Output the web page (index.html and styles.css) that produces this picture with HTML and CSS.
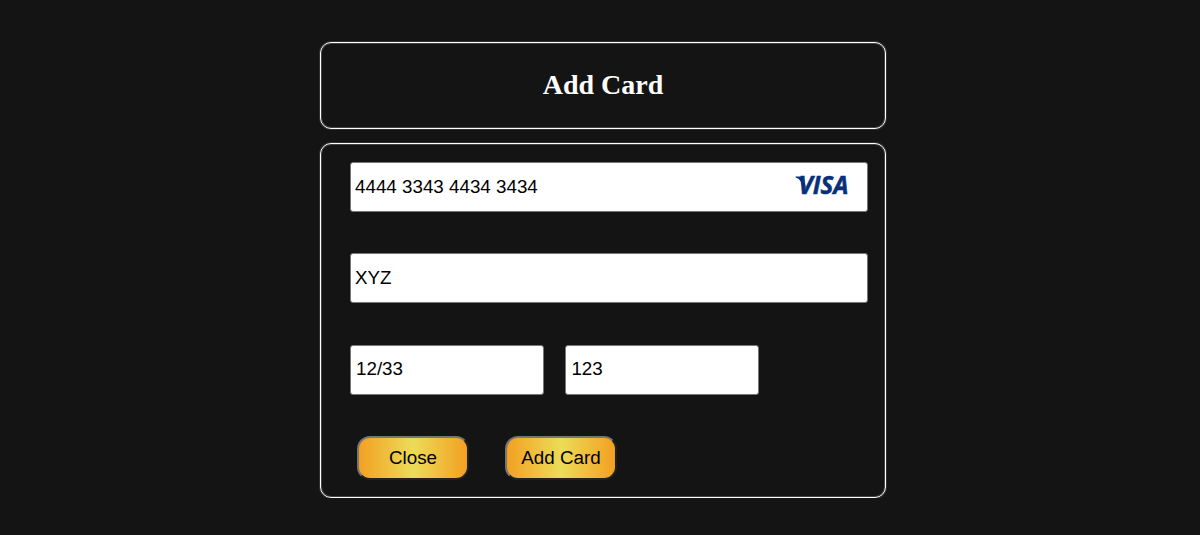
FILE: index.html
```
<!DOCTYPE html>
<html lang="en">
<head>
    <meta charset="UTF-8">
    <meta name="viewport" content="width=device-width, initial-scale=1.0">
    <title>Add Card</title>
    <link rel="stylesheet" href="styles.css">
</head>
<body>
    <div class="card-container">
        <div class="card-header">
            <h2>Add Card</h2>
        </div>

        <form class="card-form">
            <!-- Card Number -->
            <div class="input-group">
                <input type="text" name="card_number" value="4444 3343 4434 3434">
                <svg class="card-logo" width="58" height="36" viewBox="0 0 58 36">
                    <path d="M0.6 8.6 H6.4 Q8.4 8.7 8.9 10.7 L10.8 19 L8 22 L5.6 13.2 Q3.8 10.2 0.6 9.4 Z"/>
                    <text x="3.4" y="26.3" textLength="50" lengthAdjust="spacingAndGlyphs">VISA</text>
                </svg>
            </div>

            <!-- Name -->
            <div class="input-group">
                <input type="text" name="card_name" value="XYZ">
            </div>

            <!-- Expiry and CVV -->
            <div class="input-row">
                <input type="text" name="expiry" value="12/33">
                <input type="text" name="cvv" value="123">
            </div>

            <div class="buttons">
                <button type="button">Close</button>
                <button type="button">Add Card</button>
            </div>
        </form>
    </div>
</body>
</html>
```

FILE: styles.css
```
/* General Styles */
body {
    font-family: "Liberation Serif", "Times New Roman", serif;
    background-color: #141414;
    margin: 0;
}

.card-container {
    width: 566px;
    margin-left: 320px;
    padding-top: 42px;
}

.card-header,
.card-form {
    box-sizing: border-box;
    border: 1px solid #fff;
    border-radius: 11px;
    box-shadow: 0 0 0 1px rgba(255, 255, 255, 0.12), inset 0 0 0 1px rgba(255, 255, 255, 0.2);
}

.card-header {
    height: 87px;
    display: flex;
    align-items: center;
    justify-content: center;
    margin-bottom: 14px;
}

h2 {
    margin: 0;
    padding-bottom: 2px;
    color: #fff;
    font-size: 28px;
}

.card-form {
    height: 355px;
    padding: 18px 17px 0 29px;
}

.input-group {
    position: relative;
    height: 50px;
    margin-bottom: 41.4px;
}

input {
    display: block;
    box-sizing: border-box;
    width: 100%;
    height: 50px;
    padding: 0 4px 1px;
    border: 1px solid #767676;
    border-radius: 3px;
    background-color: #fff;
    color: #000;
    font-family: "Liberation Sans", Arial, sans-serif;
    font-size: 18.8px;
}

/* Card brand, shown over the right end of the input */
.card-logo {
    position: absolute;
    top: 6px;
    right: 15px;
    fill: #07307c;
}

.card-logo text {
    font-family: "Open Sans", sans-serif;
    font-size: 24.5px;
    font-weight: 700;
    font-style: italic;
    stroke: #07307c;
    stroke-width: 0.5px;
}

.input-row {
    display: flex;
    gap: 21.4px;
    margin-bottom: 41px;
}

.input-row input {
    width: 194px;
    padding-left: 5px;
}

.buttons {
    display: flex;
    gap: 36px;
    padding-left: 7px;
}

button {
    width: 112px;
    height: 44px;
    padding: 1px 0 0;
    border: 2px solid;
    border-color: #767676 #212121 #212121 #767676;
    border-radius: 13px;
    background: linear-gradient(to right, #f3a022, #ebdc58, #f3a022);
    color: #000;
    font-family: "Liberation Sans", Arial, sans-serif;
    font-size: 18.8px;
    cursor: pointer;
}
```
